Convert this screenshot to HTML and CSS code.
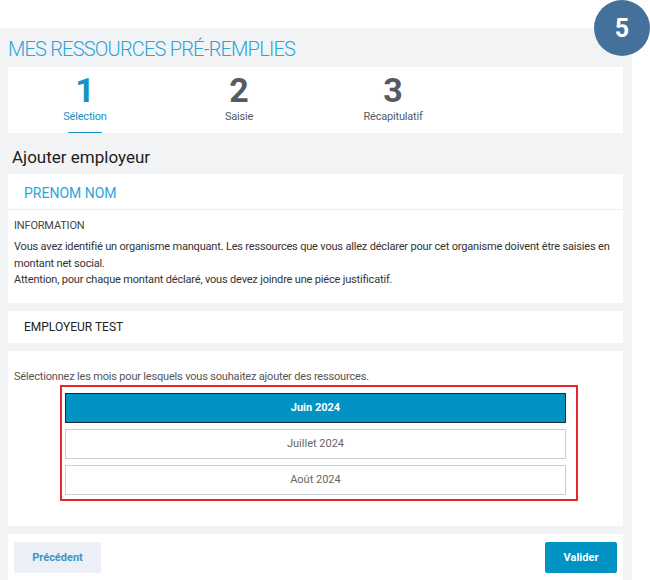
FILE: index.html
```html
<!DOCTYPE html>
<html>
<head>
  <title>Mes ressources pré-remplies</title>
  <link rel="stylesheet" href="styles.css">
</head>
<body>
  <div class="badge">5</div>
  <div class="panel">
    <h1 class="page-title">MES RESSOURCES PRÉ-REMPLIES</h1>

    <div class="card steps">
      <div class="step active">
        <div class="step-num">1</div>
        <div class="step-label">Sélection</div>
      </div>
      <div class="step">
        <div class="step-num">2</div>
        <div class="step-label">Saisie</div>
      </div>
      <div class="step">
        <div class="step-num">3</div>
        <div class="step-label">Récapitulatif</div>
      </div>
    </div>

    <h2 class="section-title">Ajouter employeur</h2>

    <div class="card info">
      <div class="info-head">PRENOM NOM</div>
      <div class="info-body">
        <div class="info-label">INFORMATION</div>
        <p>Vous avez identifié un organisme manquant. Les ressources que vous allez déclarer pour cet organisme doivent être saisies en montant net social.<br>
        Attention, pour chaque montant déclaré, vous devez joindre une piéce justificatif.</p>
      </div>
    </div>

    <div class="card employer">EMPLOYEUR TEST</div>

    <div class="card months">
      <div class="months-hint">Sélectionnez les mois pour lesquels vous souhaitez ajouter des ressources.</div>
      <div class="months-list">
        <div class="month selected">Juin 2024</div>
        <div class="month">Juillet 2024</div>
        <div class="month">Août 2024</div>
      </div>
    </div>

    <div class="card actions">
      <button class="btn btn-back">Précédent</button>
      <button class="btn btn-ok">Valider</button>
    </div>
  </div>
</body>
</html>
```

FILE: styles.css
```css
body {
  margin: 0;
  background: #fff;
  font-family: Roboto, "Liberation Sans", sans-serif;
  position: relative;
}

.badge {
  position: absolute;
  top: 0;
  left: 594px;
  width: 56px;
  height: 56px;
  border-radius: 50%;
  background-color: #44719b;
  color: #fff;
  font-size: 25px;
  font-weight: bold;
  display: flex;
  justify-content: center;
  align-items: center;
}

.panel {
  margin-top: 28px;
  width: 615px;
  padding: 0 9px 2px 8px;
  background-color: #f2f3f5;
}

.page-title {
  margin: 0;
  height: 39px;
  line-height: 42px;
  font-size: 20px;
  font-weight: 300;
  color: #2ea3d5;
  letter-spacing: -0.8px;
}

.card {
  background-color: #fff;
}

.steps {
  display: flex;
  height: 66px;
}

.step {
  width: 154px;
  text-align: center;
  color: #545b63;
  display: flex;
  flex-direction: column;
  align-items: center;
}

.step-num {
  font-size: 34px;
  font-weight: bold;
  line-height: 30px;
  margin-top: 8px;
}

.step-label {
  font-size: 11px;
  line-height: 13px;
  letter-spacing: -0.2px;
  margin-top: 5px;
}

.step.active {
  color: #1593c4;
}

.step.active::after {
  content: "";
  display: block;
  width: 34px;
  height: 4px;
  background-color: #1593c4;
  margin-top: 9px;
}

.section-title {
  margin: 0;
  height: 41px;
  line-height: 48px;
  padding-left: 4px;
  font-size: 17px;
  font-weight: normal;
  color: #1d1d1d;
}

.info-head {
  height: 35px;
  line-height: 38px;
  padding-left: 16px;
  font-size: 14px;
  color: #2aa6d8;
  border-bottom: 1px solid #eceef0;
}

.info-body {
  padding: 8px 6px 14px 6px;
  font-size: 11px;
  color: #333;
  letter-spacing: -0.18px;
}

.info-label {
  line-height: 16px;
  color: #444;
}

.info-body p {
  margin: 5px 0 0;
  line-height: 16.5px;
}

.employer {
  margin-top: 8px;
  height: 32px;
  line-height: 33px;
  padding-left: 16px;
  font-size: 12px;
  color: #222;
}

.months {
  margin-top: 8px;
  padding: 20px 6px 25px;
}

.months-hint {
  font-size: 11px;
  color: #555;
  letter-spacing: -0.18px;
  line-height: 12px;
}

.months-list {
  margin: 2px 39px 0 46px;
  border: 2px solid #e8262c;
  padding: 6px 10px 4px 3px;
  display: flex;
  flex-direction: column;
  gap: 6px;
}

.month {
  height: 28px;
  line-height: 28px;
  border: 1px solid #c9cfd2;
  text-align: center;
  font-size: 11px;
  color: #666;
}

.month.selected {
  background-color: #0093c4;
  border-color: #1b2a33;
  color: #fff;
  font-weight: bold;
}

.actions {
  margin-top: 8px;
  height: 48px;
  padding: 0 6px;
  display: flex;
  justify-content: space-between;
  align-items: center;
}

.btn {
  height: 31px;
  border: none;
  border-radius: 2px;
  font-family: Roboto, "Liberation Sans", sans-serif;
  font-size: 11px;
  font-weight: bold;
  cursor: pointer;
}

.btn-back {
  width: 87px;
  background-color: #eceff5;
  color: #3b96c7;
}

.btn-ok {
  width: 72px;
  background-color: #0093c4;
  color: #fff;
}
```
